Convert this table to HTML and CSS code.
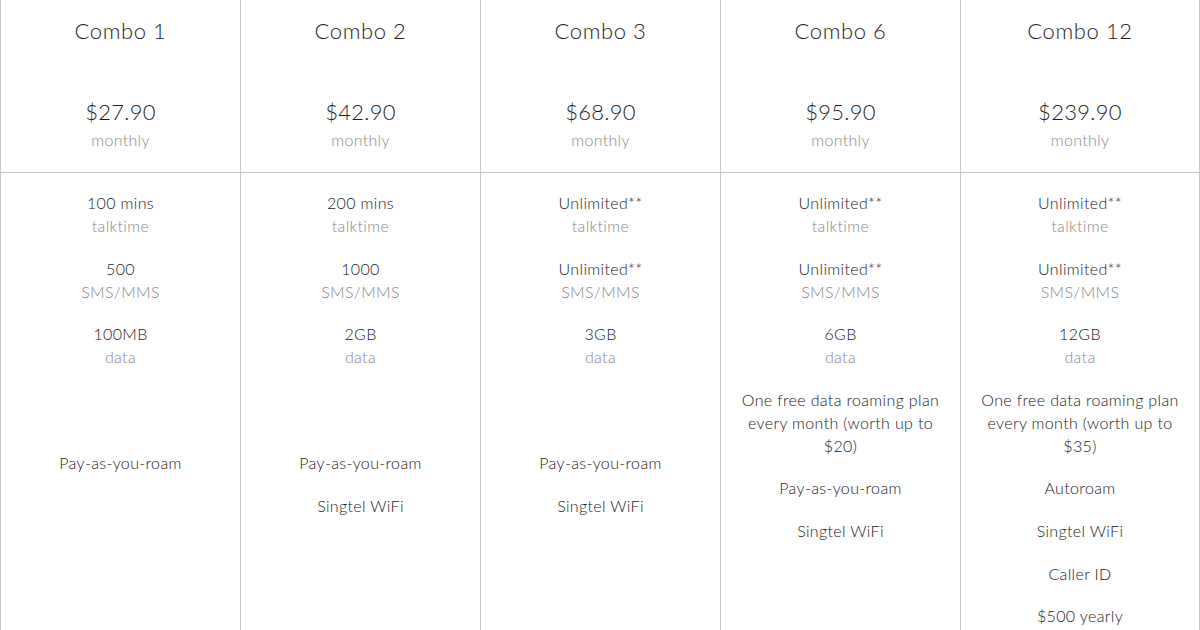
FILE: index.html
```html
<!DOCTYPE html>
<html>
<head>
<meta charset="utf-8">
<link rel="stylesheet" href="styles.css">
</head>
<body>
<div class="plans">
  <div class="plan">
    <div class="head">
      <div class="name">Combo 1</div>
      <div class="price">$27.90</div>
      <div class="period">monthly</div>
    </div>
    <div class="body">
      <div class="item"><div class="main">100 mins</div><div class="sub">talktime</div></div>
      <div class="item"><div class="main">500</div><div class="sub">SMS/MMS</div></div>
      <div class="item"><div class="main">100MB</div><div class="sub">data</div></div>
      <div class="item placeholder"></div>
      <div class="item"><div class="main">Pay-as-you-roam</div></div>
    </div>
  </div>
  <div class="plan">
    <div class="head">
      <div class="name">Combo 2</div>
      <div class="price">$42.90</div>
      <div class="period">monthly</div>
    </div>
    <div class="body">
      <div class="item"><div class="main">200 mins</div><div class="sub">talktime</div></div>
      <div class="item"><div class="main">1000</div><div class="sub">SMS/MMS</div></div>
      <div class="item"><div class="main">2GB</div><div class="sub">data</div></div>
      <div class="item placeholder"></div>
      <div class="item"><div class="main">Pay-as-you-roam</div></div>
      <div class="item"><div class="main">Singtel WiFi</div></div>
    </div>
  </div>
  <div class="plan">
    <div class="head">
      <div class="name">Combo 3</div>
      <div class="price">$68.90</div>
      <div class="period">monthly</div>
    </div>
    <div class="body">
      <div class="item"><div class="main">Unlimited**</div><div class="sub">talktime</div></div>
      <div class="item"><div class="main">Unlimited**</div><div class="sub">SMS/MMS</div></div>
      <div class="item"><div class="main">3GB</div><div class="sub">data</div></div>
      <div class="item placeholder"></div>
      <div class="item"><div class="main">Pay-as-you-roam</div></div>
      <div class="item"><div class="main">Singtel WiFi</div></div>
    </div>
  </div>
  <div class="plan">
    <div class="head">
      <div class="name">Combo 6</div>
      <div class="price">$95.90</div>
      <div class="period">monthly</div>
    </div>
    <div class="body">
      <div class="item"><div class="main">Unlimited**</div><div class="sub">talktime</div></div>
      <div class="item"><div class="main">Unlimited**</div><div class="sub">SMS/MMS</div></div>
      <div class="item"><div class="main">6GB</div><div class="sub">data</div></div>
      <div class="item"><div class="main wrap">One free data roaming plan every month (worth up to $20)</div></div>
      <div class="item"><div class="main">Pay-as-you-roam</div></div>
      <div class="item"><div class="main">Singtel WiFi</div></div>
    </div>
  </div>
  <div class="plan last">
    <div class="head">
      <div class="name">Combo 12</div>
      <div class="price">$239.90</div>
      <div class="period">monthly</div>
    </div>
    <div class="body">
      <div class="item"><div class="main">Unlimited**</div><div class="sub">talktime</div></div>
      <div class="item"><div class="main">Unlimited**</div><div class="sub">SMS/MMS</div></div>
      <div class="item"><div class="main">12GB</div><div class="sub">data</div></div>
      <div class="item"><div class="main wrap">One free data roaming plan every month (worth up to $35)</div></div>
      <div class="item"><div class="main">Autoroam</div></div>
      <div class="item"><div class="main">Singtel WiFi</div></div>
      <div class="item"><div class="main">Caller ID</div></div>
      <div class="item"><div class="main">$500 yearly</div></div>
    </div>
  </div>
</div>
</body>
</html>
```

FILE: styles.css
```css
html, body {
  margin: 0;
  padding: 0;
  background: #fff;
}
body {
  font-family: Lato, "Open Sans", sans-serif;
  font-weight: 300;
  color: #222;
  width: 1200px;
  height: 630px;
  overflow: hidden;
}
.plans {
  display: flex;
  width: 1200px;
}
.plan {
  flex: 0 0 240px;
  box-sizing: border-box;
  border-left: 1px solid #c8c8c8;
  text-align: center;
  min-height: 700px;
}
.plan.last {
  border-right: 1px solid #c8c8c8;
}
.head {
  height: 173px;
  box-sizing: border-box;
  border-bottom: 1px solid #c8c8c8;
  padding-top: 16px;
}
.name {
  font-size: 22px;
  line-height: 30px;
  letter-spacing: 0.6px;
  color: #1e1e1e;
}
.price {
  font-size: 22px;
  line-height: 28px;
  margin-top: 52px;
  letter-spacing: 0.3px;
  color: #1e1e1e;
}
.period {
  font-size: 16px;
  line-height: 24px;
  margin-top: 2px;
  color: #888;
  letter-spacing: 0.3px;
}
.body {
  padding: 18px 14px 0;
  display: flex;
  flex-direction: column;
  gap: 19.6px;
}
.item {
  font-size: 16px;
  line-height: 23px;
  letter-spacing: 0.35px;
}
.placeholder {
  height: 44px;
}
.main {
  color: #222;
}
.sub {
  color: #888;
}
```
